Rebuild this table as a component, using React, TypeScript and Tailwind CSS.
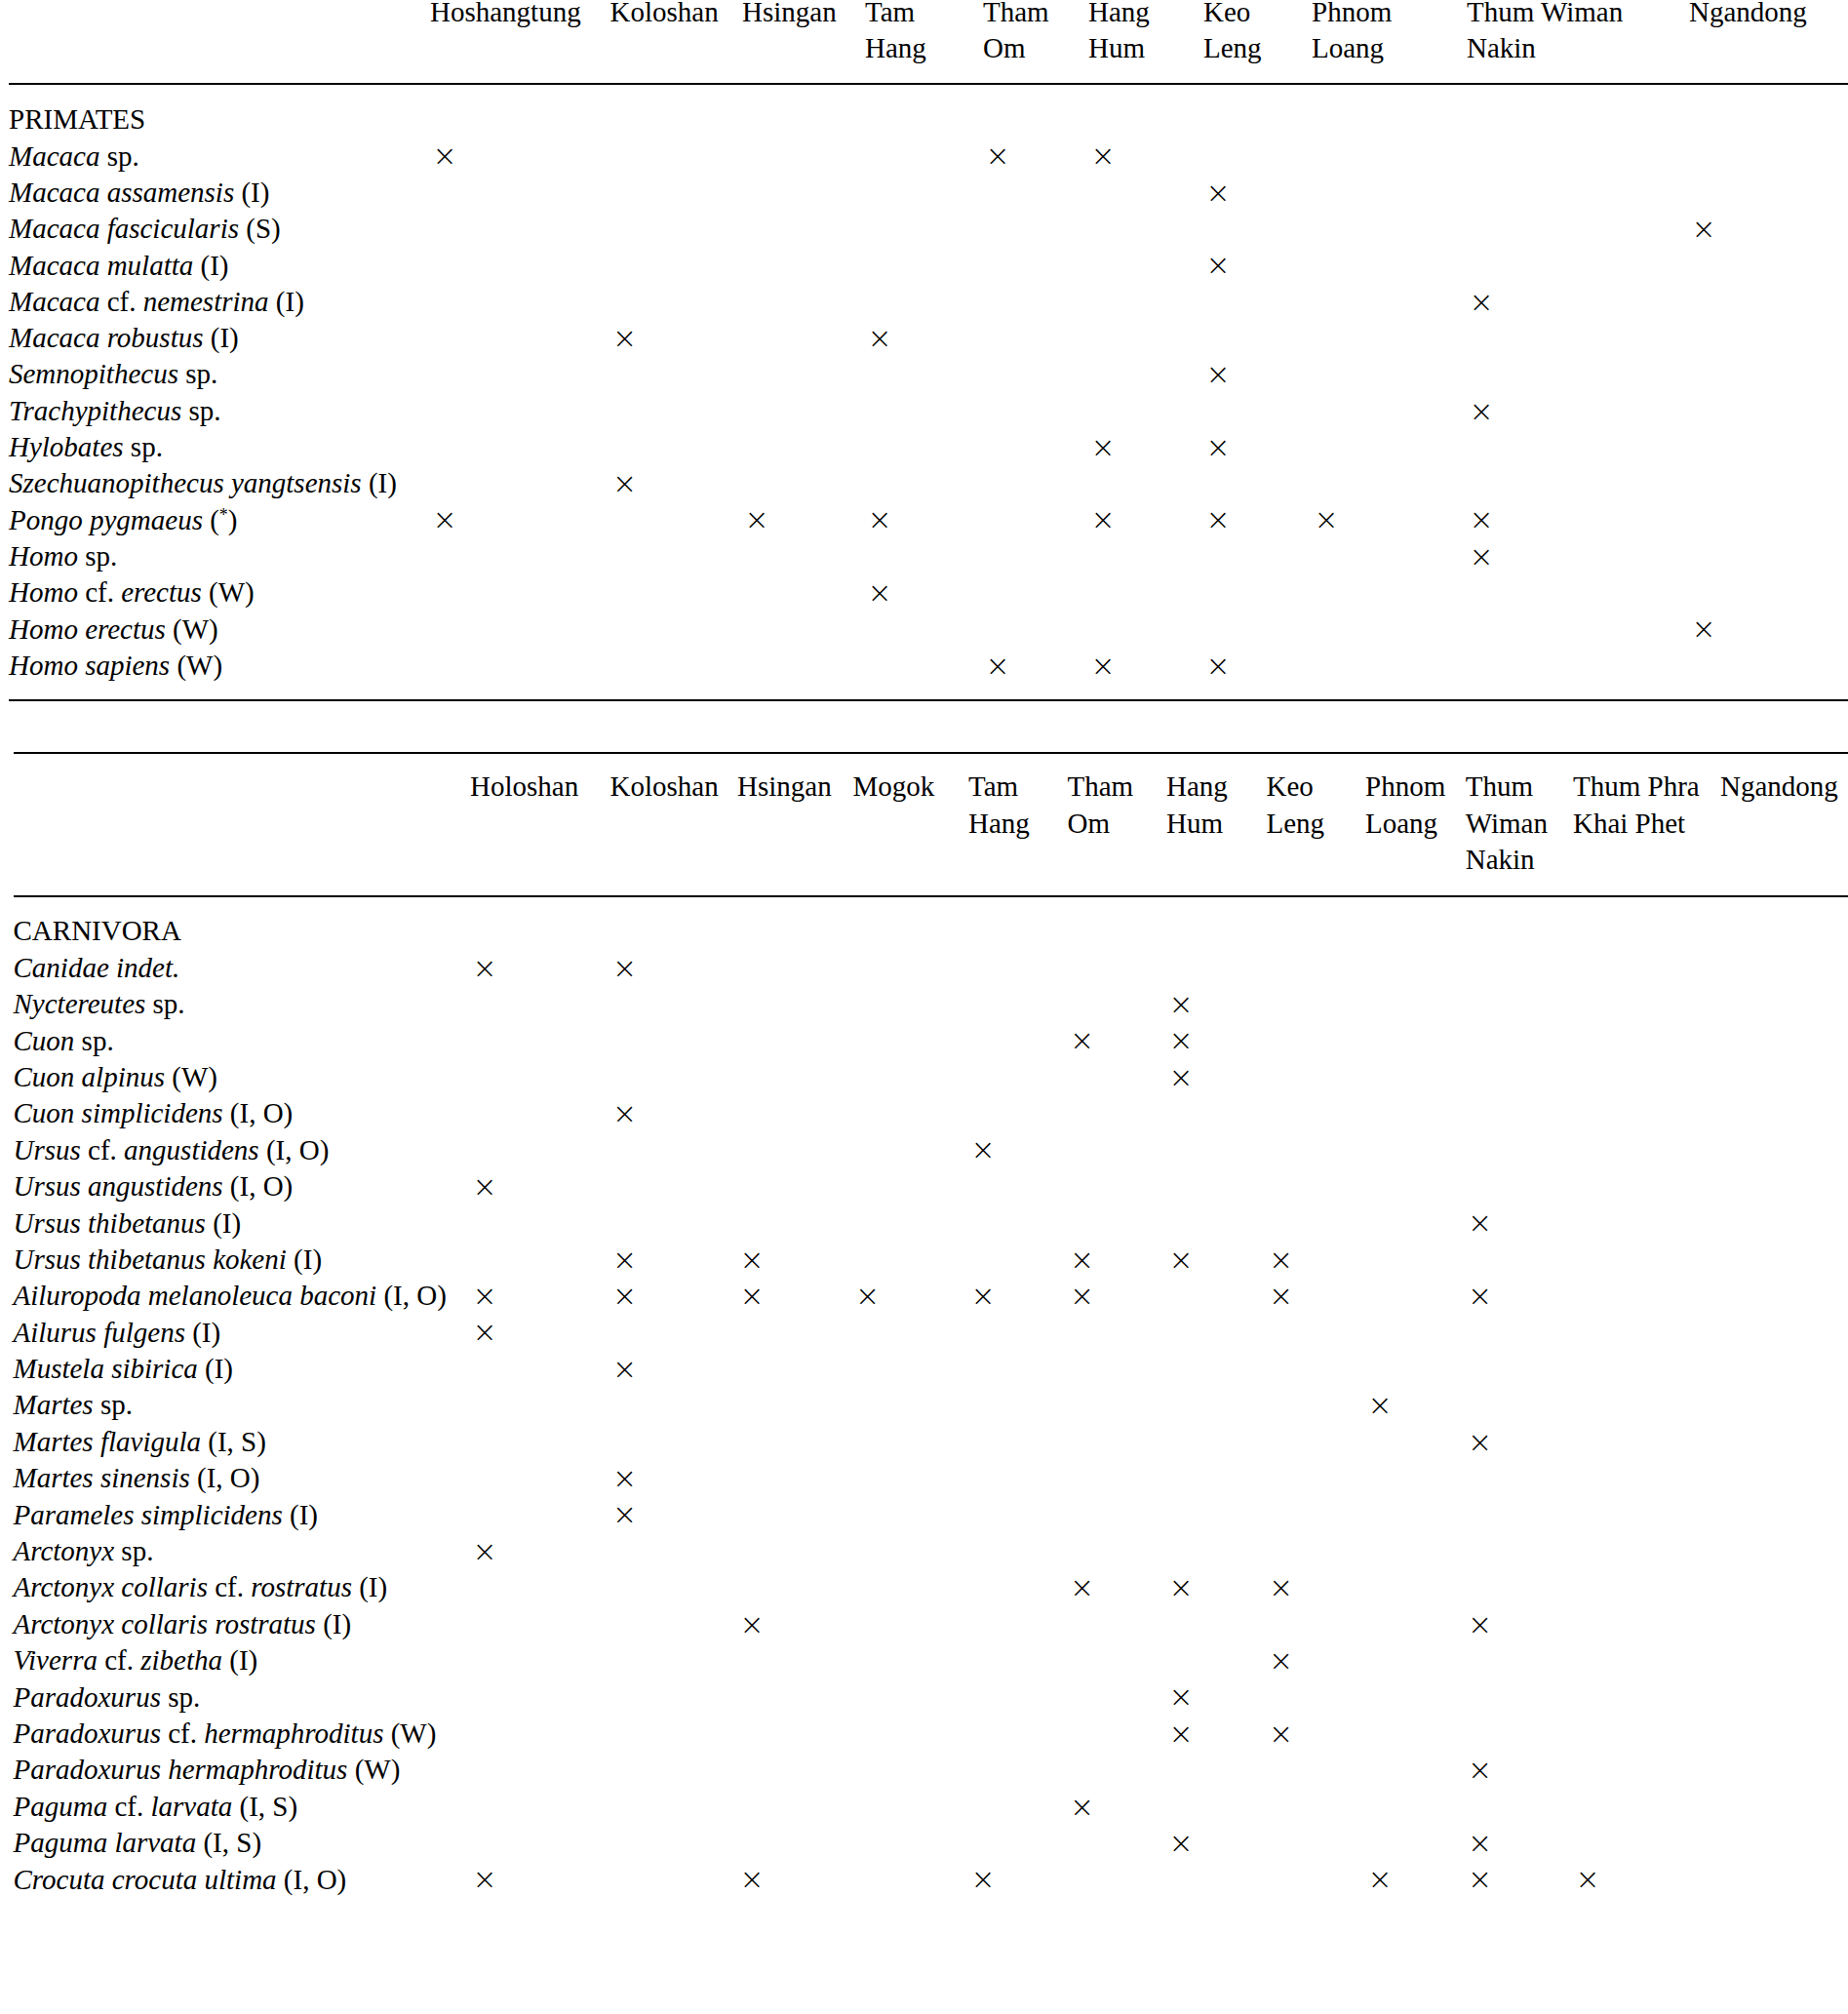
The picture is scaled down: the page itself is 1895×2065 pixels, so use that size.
import React from "react";

const primateCols = [
  ["Hoshangtung"],
  ["Koloshan"],
  ["Hsingan"],
  ["Tam", "Hang"],
  ["Tham", "Om"],
  ["Hang", "Hum"],
  ["Keo", "Leng"],
  ["Phnom", "Loang"],
  ["Thum Wiman", "Nakin"],
  ["Ngandong"],
];

const primates = [
  { name: "_Macaca_ sp.", marks: [0, 4, 5] },
  { name: "_Macaca assamensis_ (I)", marks: [6] },
  { name: "_Macaca fascicularis_ (S)", marks: [9] },
  { name: "_Macaca mulatta_ (I)", marks: [6] },
  { name: "_Macaca_ cf. _nemestrina_ (I)", marks: [8] },
  { name: "_Macaca robustus_ (I)", marks: [1, 3] },
  { name: "_Semnopithecus_ sp.", marks: [6] },
  { name: "_Trachypithecus_ sp.", marks: [8] },
  { name: "_Hylobates_ sp.", marks: [5, 6] },
  { name: "_Szechuanopithecus yangtsensis_ (I)", marks: [1] },
  { name: "_Pongo pygmaeus_ (^)", marks: [0, 2, 3, 5, 6, 7, 8] },
  { name: "_Homo_ sp.", marks: [8] },
  { name: "_Homo_ cf. _erectus_ (W)", marks: [3] },
  { name: "_Homo erectus_ (W)", marks: [9] },
  { name: "_Homo sapiens_ (W)", marks: [4, 5, 6] },
];

const carnivoraCols = [
  ["Holoshan"],
  ["Koloshan"],
  ["Hsingan"],
  ["Mogok"],
  ["Tam", "Hang"],
  ["Tham", "Om"],
  ["Hang", "Hum"],
  ["Keo", "Leng"],
  ["Phnom", "Loang"],
  ["Thum", "Wiman", "Nakin"],
  ["Thum Phra", "Khai Phet"],
  ["Ngandong"],
];

const carnivora = [
  { name: "_Canidae indet._", marks: [0, 1] },
  { name: "_Nyctereutes_ sp.", marks: [6] },
  { name: "_Cuon_ sp.", marks: [5, 6] },
  { name: "_Cuon alpinus_ (W)", marks: [6] },
  { name: "_Cuon simplicidens_ (I, O)", marks: [1] },
  { name: "_Ursus_ cf. _angustidens_ (I, O)", marks: [4] },
  { name: "_Ursus angustidens_ (I, O)", marks: [0] },
  { name: "_Ursus thibetanus_ (I)", marks: [9] },
  { name: "_Ursus thibetanus kokeni_ (I)", marks: [1, 2, 5, 6, 7] },
  { name: "_Ailuropoda melanoleuca baconi_ (I, O)", marks: [0, 1, 2, 3, 4, 5, 7, 9] },
  { name: "_Ailurus fulgens_ (I)", marks: [0] },
  { name: "_Mustela sibirica_ (I)", marks: [1] },
  { name: "_Martes_ sp.", marks: [8] },
  { name: "_Martes flavigula_ (I, S)", marks: [9] },
  { name: "_Martes sinensis_ (I, O)", marks: [1] },
  { name: "_Parameles simplicidens_ (I)", marks: [1] },
  { name: "_Arctonyx_ sp.", marks: [0] },
  { name: "_Arctonyx collaris_ cf. _rostratus_ (I)", marks: [5, 6, 7] },
  { name: "_Arctonyx collaris rostratus_ (I)", marks: [2, 9] },
  { name: "_Viverra_ cf. _zibetha_ (I)", marks: [7] },
  { name: "_Paradoxurus_ sp.", marks: [6] },
  { name: "_Paradoxurus_ cf. _hermaphroditus_ (W)", marks: [6, 7] },
  { name: "_Paradoxurus hermaphroditus_ (W)", marks: [9] },
  { name: "_Paguma_ cf. _larvata_ (I, S)", marks: [5] },
  { name: "_Paguma larvata_ (I, S)", marks: [6, 9] },
  { name: "_Crocuta crocuta ultima_ (I, O)", marks: [0, 2, 4, 8, 9, 10] },
];

// "_" toggles italics, "^" is the raised asterisk
const Taxon = ({ text }: { text: string }) => (
  <>
    {text.split("_").map((part, i) =>
      i % 2 === 1 ? (
        <i key={i}>{part}</i>
      ) : (
        <React.Fragment key={i}>
          {part.split("^").map((p, j) => (
            <React.Fragment key={j}>
              {j > 0 && <sup className="text-[18px]">*</sup>}
              {p}
            </React.Fragment>
          ))}
        </React.Fragment>
      )
    )}
  </>
);

const Mark = () => (
  <span className="inline-flex w-[30px] items-center justify-center font-['DejaVu_Sans',sans-serif] text-[30px] font-extralight leading-none">
    ×
  </span>
);

const TOP_GRID =
  "grid grid-cols-[432px_184.5px_135.5px_126px_121px_108px_118px_111px_159px_228px_1fr]";
const BOTTOM_GRID =
  "grid grid-cols-[468.5px_143.5px_130.5px_118.5px_118.5px_101.5px_101.5px_102.5px_101.5px_102.7px_110.3px_151px_1fr]";

const Header = ({ grid, cols }: { grid: string; cols: string[][] }) => (
  <div className={grid}>
    <div />
    {cols.map((lines, c) => (
      <div key={c} className="flex flex-col leading-[37.3px]">
        {lines.map((l) => (
          <span key={l} className="whitespace-nowrap">
            {l}
          </span>
        ))}
      </div>
    ))}
  </div>
);

const Body = ({
  grid,
  cols,
  group,
  rows,
  rowHeight,
}: {
  grid: string;
  cols: string[][];
  group: string;
  rows: { name: string; marks: number[] }[];
  rowHeight: string;
}) => (
  <div className="flex flex-col">
    <div className={`${grid} ${rowHeight} items-center`}>
      <span className="whitespace-nowrap">{group}</span>
    </div>
    {rows.map((row) => (
      <div key={row.name} className={`${grid} ${rowHeight} items-center`}>
        <span className="whitespace-nowrap">
          <Taxon text={row.name} />
        </span>
        {cols.map((_, c) => (
          <div key={c} className="flex items-center">
            {row.marks.includes(c) && <Mark />}
          </div>
        ))}
      </div>
    ))}
  </div>
);

export default function App() {
  return (
    <div className="min-h-[2065px] bg-white font-['Liberation_Serif','Times_New_Roman',serif] text-[29px] text-black">
      <section className="ml-[9px] mt-[-6px] flex flex-col">
        <div className="h-[74.6px]">
          <Header grid={TOP_GRID} cols={primateCols} />
        </div>
        <div className="mt-[16.4px] h-[2px] bg-black" />
        <div className="mt-[14.4px]">
          <Body
            grid={TOP_GRID}
            cols={primateCols}
            group="PRIMATES"
            rows={primates}
            rowHeight="h-[37.3px]"
          />
        </div>
        <div className="mt-[19.3px] h-[2px] bg-black" />
      </section>

      <section className="ml-[13.5px] mt-[51.5px] flex flex-col">
        <div className="h-[2px] bg-black" />
        <div className="mt-[15.4px] h-[111.9px]">
          <Header grid={BOTTOM_GRID} cols={carnivoraCols} />
        </div>
        <div className="mt-[17.7px] h-[2px] bg-black" />
        <div className="mt-[13.5px]">
          <Body
            grid={BOTTOM_GRID}
            cols={carnivoraCols}
            group="CARNIVORA"
            rows={carnivora}
            rowHeight="h-[37.4px]"
          />
        </div>
      </section>
    </div>
  );
}
